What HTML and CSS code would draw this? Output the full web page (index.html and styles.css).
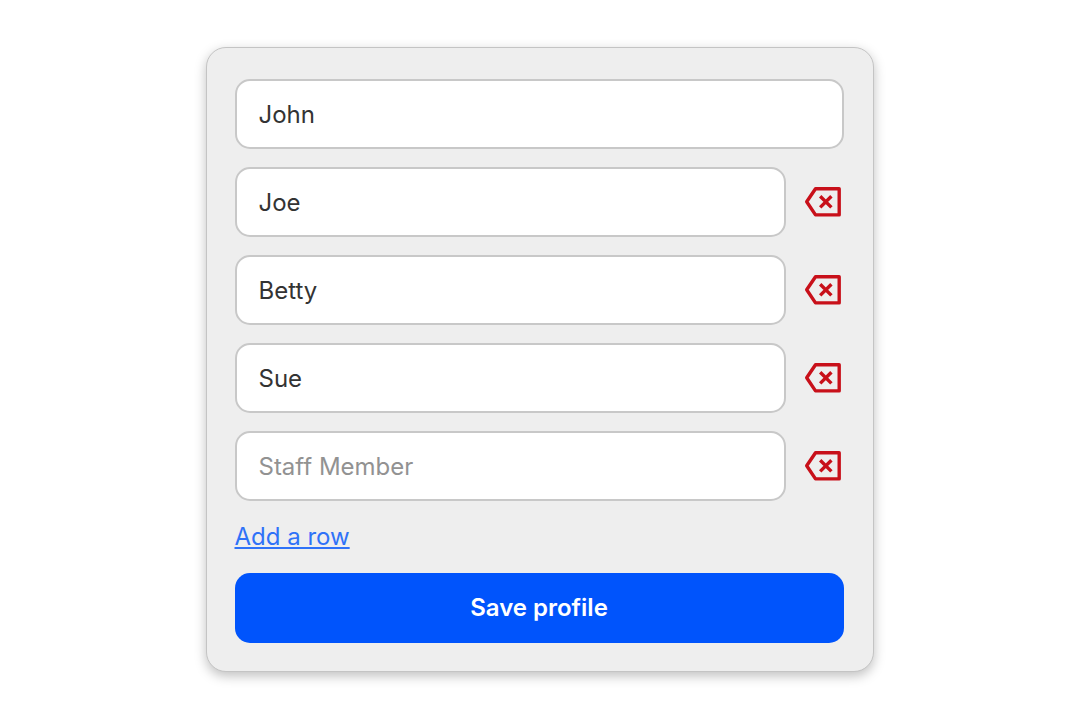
FILE: index.html
```html
<!DOCTYPE html>
<html lang="en">
  <head>
    <meta charset="UTF-8" />
    <meta name="viewport" content="width=device-width, initial-scale=1.0" />
    <title>Save profile</title>
    <link rel="stylesheet" href="styles.css">
  </head>
  <body>
    <svg width="0" height="0" class="sprite" aria-hidden="true">
      <symbol id="icon-remove" viewBox="0 0 40 32">
        <path d="M11.5 2.7H35.2V28.9H11.5L2.7 15.8Z" />
        <path d="M16.2 10.2L27.4 21.4M27.4 10.2L16.2 21.4" />
      </symbol>
    </svg>

    <form id="profileForm" class="card">
      <div id="rows" class="rows">
        <div class="row">
          <input type="text" value="John" placeholder="Staff Member" aria-label="Staff Member" />
        </div>
        <div class="row">
          <input type="text" value="Joe" placeholder="Staff Member" aria-label="Staff Member" />
          <button type="button" class="remove" aria-label="Remove row"><svg><use href="#icon-remove" /></svg></button>
        </div>
        <div class="row">
          <input type="text" value="Betty" placeholder="Staff Member" aria-label="Staff Member" />
          <button type="button" class="remove" aria-label="Remove row"><svg><use href="#icon-remove" /></svg></button>
        </div>
        <div class="row">
          <input type="text" value="Sue" placeholder="Staff Member" aria-label="Staff Member" />
          <button type="button" class="remove" aria-label="Remove row"><svg><use href="#icon-remove" /></svg></button>
        </div>
        <div class="row">
          <input type="text" placeholder="Staff Member" aria-label="Staff Member" />
          <button type="button" class="remove" aria-label="Remove row"><svg><use href="#icon-remove" /></svg></button>
        </div>
      </div>

      <a href="#" id="addRow" class="add">Add a row</a>

      <button type="submit" class="save">Save profile</button>
    </form>

    <script>
      const rows = document.getElementById("rows");

      // Remove a row
      rows.addEventListener("click", function (e) {
        const button = e.target.closest(".remove");
        if (button) {
          button.parentElement.remove();
        }
      });

      // Add an empty row at the end
      document.getElementById("addRow").addEventListener("click", function (e) {
        e.preventDefault();
        const row = document.createElement("div");
        row.className = "row";
        row.innerHTML = `<input type="text" placeholder="Staff Member" aria-label="Staff Member" />
          <button type="button" class="remove" aria-label="Remove row"><svg><use href="#icon-remove" /></svg></button>`;
        rows.appendChild(row);
      });

      document.getElementById("profileForm").addEventListener("submit", function (e) {
        e.preventDefault();
      });
    </script>
  </body>
</html>
```

FILE: styles.css
```css
* {
  box-sizing: border-box;
}
body {
  margin: 0;
  padding: 47px 20px;
  background: #fff;
  color: #333;
  font-family: Inter, sans-serif;
  font-size: 24px;
  line-height: 32px;
}
.sprite {
  display: block;
}
.card {
  display: flex;
  flex-direction: column;
  align-items: flex-start;
  max-width: 668px;
  margin: 0 auto;
  padding: 31px 29px 28px 28px;
  background: #eee;
  border: 1px solid #c4c4c4;
  border-radius: 20px;
  box-shadow: 0 4px 12px rgba(0, 0, 0, 0.25);
}
.rows {
  display: flex;
  flex-direction: column;
  gap: 18px;
  width: 100%;
}
.row {
  display: flex;
  align-items: center;
  gap: 18px;
}
input {
  flex: 1;
  min-width: 0;
  height: 70px;
  padding: 0 22px;
  background: #fff;
  border: 2px solid #c8c8c8;
  border-radius: 15px;
  color: #333;
  font: inherit;
}
input::placeholder {
  color: #929292;
  opacity: 1;
}
.remove {
  width: 40px;
  height: 32px;
  padding: 0;
  background: none;
  border: none;
  cursor: pointer;
}
.remove svg {
  display: block;
  width: 40px;
  height: 32px;
  fill: none;
  stroke: #c8101a;
  stroke-width: 3.4;
  stroke-linejoin: round;
}
.add {
  margin: 20px 0;
  color: #2f72f8;
  text-underline-offset: 2px;
  text-decoration-thickness: 2px;
}
.save {
  width: 100%;
  height: 70px;
  background: #0054fc;
  border: none;
  border-radius: 15px;
  color: #fff;
  font: inherit;
  font-weight: 600;
  cursor: pointer;
}
.save:hover {
  background: #0048d8;
}
```
